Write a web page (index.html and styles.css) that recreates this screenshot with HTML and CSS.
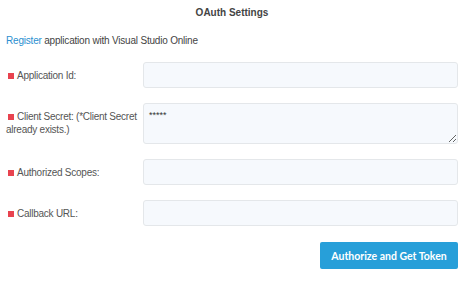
FILE: index.html
```html
<!DOCTYPE html>
<html lang="en">

<head>
    <meta charset="UTF-8">
    <meta name="viewport" content="width=device-width, initial-scale=1.0">
    <title>OAuth Settings</title>
    <link rel="stylesheet" href="styles.css">
</head>

<body>
    <div class="container">
        <h2 class="title">OAuth Settings</h2>
        <p class="intro"><a href="#">Register</a> application with Visual Studio Online</p>

        <div class="form">
            <label class="field-label"><span class="req"></span>Application Id:</label>
            <input type="text" class="field">

            <label class="field-label"><span class="req"></span>Client Secret: (*Client Secret<br>already exists.)</label>
            <textarea class="field area">*****</textarea>

            <label class="field-label"><span class="req"></span>Authorized Scopes:</label>
            <input type="text" class="field">

            <label class="field-label"><span class="req"></span>Callback URL:</label>
            <input type="text" class="field">
        </div>

        <div class="actions">
            <button class="btn">Authorize and Get Token</button>
        </div>
    </div>
</body>

</html>
```
FILE: styles.css
```css
body {
    margin: 0;
    background-color: #ffffff;
    font-family: "Liberation Sans", Arial, sans-serif;
    color: #4a4a4a;
}

.container {
    margin: 0 16px 0 6px;
}

.title {
    margin: 0;
    padding-top: 6px;
    font-size: 10px;
    line-height: 13px;
    text-align: center;
    font-weight: bold;
    color: #444;
}

.intro {
    margin: 15px 0 0;
    font-size: 10px;
    line-height: 13px;
    letter-spacing: -0.2px;
    color: #444;
}

.intro a {
    color: #2a8fd0;
    text-decoration: none;
}

.form {
    display: grid;
    grid-template-columns: 137px 1fr;
    row-gap: 15px;
    margin-top: 15px;
    align-items: start;
}

.field-label {
    font-size: 10px;
    line-height: 13px;
    letter-spacing: -0.25px;
    padding-top: 7px;
    white-space: nowrap;
    color: #555;
}

.req {
    display: inline-block;
    width: 6px;
    height: 6px;
    margin: 0 3px 0 2px;
    background-color: #e8434f;
}

.field {
    box-sizing: border-box;
    width: 100%;
    height: 26px;
    margin: 0;
    border: 1px solid #e4e7ea;
    border-radius: 3px;
    background-color: #f6f9fd;
    font-family: "Liberation Sans", Arial, sans-serif;
    font-size: 9px;
    color: #333;
    padding: 6px 5px;
}

.area {
    height: 41px;
    resize: vertical;
    display: block;
}

.actions {
    display: flex;
    justify-content: flex-end;
    margin-top: 16px;
}

.btn {
    width: 138px;
    height: 27px;
    border: none;
    border-radius: 2px;
    background-color: #279fd9;
    color: #ffffff;
    font-family: Lato, "Liberation Sans", sans-serif;
    font-weight: bold;
    font-size: 10.5px;
    padding: 0;
}
```
